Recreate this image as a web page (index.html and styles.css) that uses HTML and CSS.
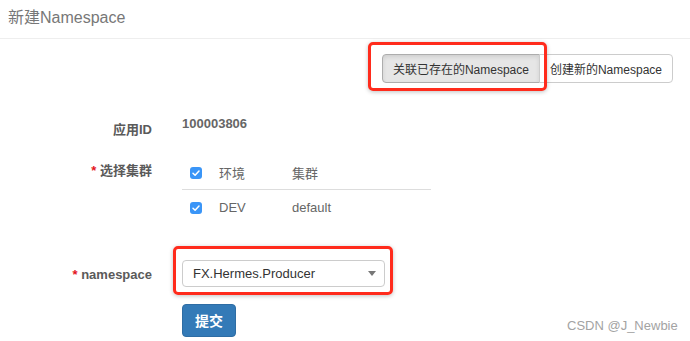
FILE: index.html
```html
<!DOCTYPE html>
<html lang="zh-CN">
<head>
    <meta charset="UTF-8">
    <meta name="viewport" content="width=device-width, initial-scale=1.0">
    <title>新建Namespace</title>
    <link rel="stylesheet" href="styles.css">
</head>
<body>

    <header class="page-title">新建Namespace</header>

    <div class="toolbar">
        <div class="btn-group">
            <button class="btn active">关联已存在的Namespace</button>
            <button class="btn">创建新的Namespace</button>
            <span class="mark mark-btn"></span>
        </div>
    </div>

    <form class="form" autocomplete="off">
        <div class="form-row row-appid">
            <label class="form-label">应用ID</label>
            <div class="form-field value">100003806</div>
        </div>

        <div class="form-row row-cluster">
            <label class="form-label"><span class="req">*</span> 选择集群</label>
            <div class="form-field">
                <table class="cluster-table">
                    <tr class="head">
                        <td class="col-check"><span class="check"><svg width="12" height="12" viewBox="0 0 12 12"><path d="M3 6.2 L5.1 8.3 L9 4" fill="none" stroke="#fff" stroke-width="1.5" stroke-linecap="round" stroke-linejoin="round"/></svg></span></td>
                        <td class="col-env">环境</td>
                        <td>集群</td>
                    </tr>
                    <tr>
                        <td class="col-check"><span class="check"><svg width="12" height="12" viewBox="0 0 12 12"><path d="M3 6.2 L5.1 8.3 L9 4" fill="none" stroke="#fff" stroke-width="1.5" stroke-linecap="round" stroke-linejoin="round"/></svg></span></td>
                        <td class="col-env">DEV</td>
                        <td>default</td>
                    </tr>
                </table>
            </div>
        </div>

        <div class="form-row row-ns">
            <label class="form-label"><span class="req">*</span> namespace</label>
            <div class="form-field select-wrap">
                <div class="select">
                    <span>FX.Hermes.Producer</span>
                    <span class="caret"></span>
                </div>
                <span class="mark mark-select"></span>
            </div>
        </div>

        <div class="form-row row-submit">
            <div class="form-label"></div>
            <div class="form-field">
                <button type="submit" class="btn-primary">提交</button>
            </div>
        </div>
    </form>

    <div class="watermark">CSDN @J_Newbie</div>

</body>
</html>
```

FILE: styles.css
```css
body {
    font-family: "Liberation Sans", "Noto Sans CJK SC", sans-serif;
    margin: 0;
    padding: 0;
    background-color: #fff;
    color: #555;
    height: 341px;
    position: relative;
    overflow: hidden;
}
.page-title {
    height: 39px;
    box-sizing: border-box;
    padding: 8px 0 0 8px;
    font-size: 16px;
    line-height: 20px;
    color: #777;
    border-bottom: 1px solid #eee;
}
.toolbar {
    display: flex;
    justify-content: flex-end;
    padding: 15px 17px 0 0;
}
.btn-group {
    display: flex;
    position: relative;
}
.btn {
    height: 29px;
    padding: 0 10px;
    font-family: inherit;
    font-size: 12px;
    color: #333;
    background-color: #fff;
    border: 1px solid #ccc;
    border-radius: 0 4px 4px 0;
    margin-left: -1px;
}
.btn.active {
    background-color: #e6e6e6;
    border-color: #adadad;
    border-radius: 4px 0 0 4px;
    margin-left: 0;
    box-shadow: inset 0 2px 4px rgba(0, 0, 0, 0.1);
}
.mark {
    position: absolute;
    border: 3px solid #ff2b1c;
    border-radius: 5px;
    box-shadow: 0 1px 4px rgba(0, 0, 0, 0.25);
    pointer-events: none;
}
.mark-btn {
    left: -14px;
    top: -12px;
    width: 173px;
    height: 43px;
}
.form-row {
    display: flex;
}
.form-label {
    width: 152px;
    flex-shrink: 0;
    text-align: right;
    font-size: 13px;
    font-weight: bold;
    line-height: 14px;
    color: #5a5a5a;
}
.req {
    color: #e4141b;
}
.form-field {
    margin-left: 30px;
}
.row-appid {
    margin-top: 34px;
}
.row-appid .form-label {
    padding-top: 6px;
}
.value {
    font-size: 13px;
    font-weight: bold;
    line-height: 14px;
    color: #666;
}
.row-cluster {
    margin-top: 22px;
}
.row-cluster .form-label {
    padding-top: 5px;
}
.cluster-table {
    width: 249px;
    border-collapse: collapse;
    font-size: 13px;
    color: #666;
}
.cluster-table td {
    padding: 0;
    vertical-align: middle;
}
.cluster-table tr td {
    height: 35px;
}
.cluster-table .head td {
    height: 30px;
    padding-bottom: 3px;
    box-sizing: border-box;
    border-bottom: 1px solid #ddd;
}
.col-check {
    width: 37px;
    padding-left: 8px !important;
    box-sizing: border-box;
}
.col-env {
    width: 73px;
}
.check {
    display: block;
    width: 12px;
    height: 12px;
    background-color: #3a95f7;
    border-radius: 3px;
    margin-top: 1px;
}
.check svg {
    display: block;
}
.row-ns {
    margin-top: 35px;
}
.row-ns .form-label {
    padding-top: 8px;
}
.select-wrap {
    position: relative;
}
.select {
    width: 203px;
    height: 27px;
    box-sizing: border-box;
    padding: 0 8px 0 10px;
    border: 1px solid #ccc;
    border-radius: 4px;
    display: flex;
    align-items: center;
    justify-content: space-between;
    font-size: 13px;
    color: #333;
}
.caret {
    width: 0;
    height: 0;
    border-left: 4px solid transparent;
    border-right: 4px solid transparent;
    border-top: 5px solid #777;
}
.mark-select {
    left: -9px;
    top: -14px;
    width: 214px;
    height: 43px;
}
.row-submit {
    margin-top: 17px;
}
.btn-primary {
    width: 54px;
    height: 33px;
    padding: 0;
    font-family: inherit;
    font-size: 14px;
    font-weight: bold;
    color: #fff;
    background-color: #337ab7;
    border: 1px solid #2e6da4;
    border-radius: 4px;
}
.watermark {
    position: absolute;
    left: 567px;
    top: 318px;
    font-size: 13px;
    line-height: 15px;
    color: #a3a3a3;
}
```
